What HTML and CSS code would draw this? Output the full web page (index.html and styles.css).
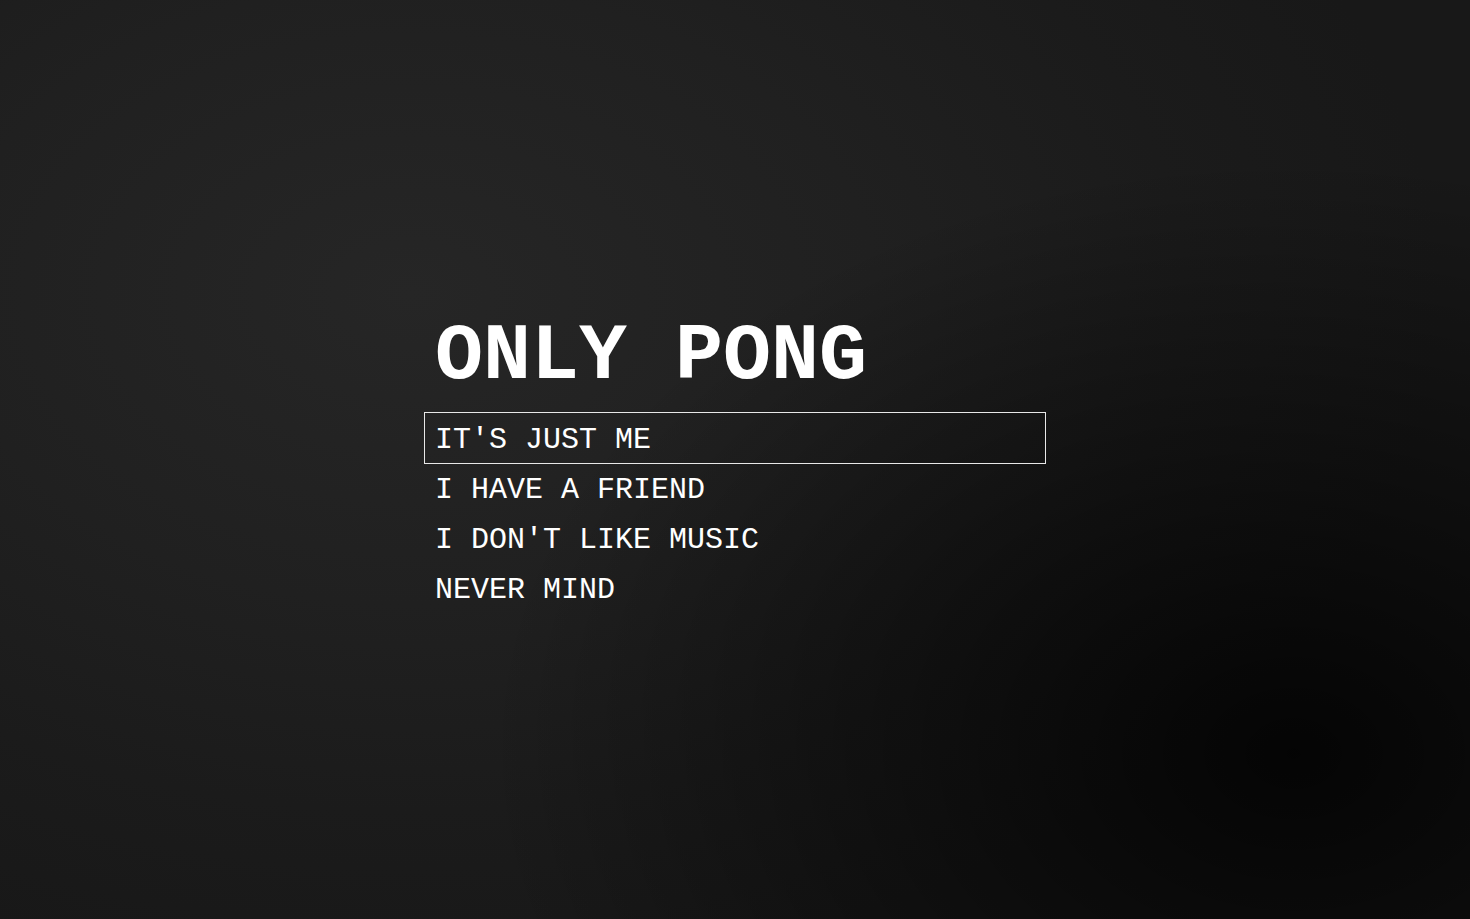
FILE: index.html
```html
<!DOCTYPE html>
<html lang="en">
<head>
<meta charset="utf-8">
<title>Only Pong</title>
<link rel="stylesheet" href="styles.css">
</head>
<body>
<main class="screen">
  <div class="panel">
    <h1 class="title">ONLY PONG</h1>
    <ul class="menu">
      <li class="item selected">IT'S JUST ME</li>
      <li class="item">I HAVE A FRIEND</li>
      <li class="item">I DON'T LIKE MUSIC</li>
      <li class="item">NEVER MIND</li>
    </ul>
  </div>
</main>
</body>
</html>
```
FILE: styles.css
```css
html, body {
  margin: 0;
  padding: 0;
  height: 100%;
}
body {
  background-color: #1a1a1a;
  background-image:
    radial-gradient(ellipse 55% 65% at 88% 82%, rgba(0,0,0,0.82) 0%, rgba(0,0,0,0.45) 45%, rgba(0,0,0,0) 100%),
    radial-gradient(ellipse 70% 75% at 28% 32%, #262626 0%, #202020 45%, #1b1b1b 75%, #181818 100%);
  font-family: "Liberation Mono", "DejaVu Sans Mono", monospace;
  color: #ffffff;
  overflow: hidden;
}
.screen {
  min-height: 100vh;
  box-sizing: border-box;
  padding-top: 4px;
  display: flex;
  align-items: center;
  justify-content: center;
}
.panel {
  width: 620px;
  display: flex;
  flex-direction: column;
}
.title {
  margin: 0 0 11px 0;
  padding-left: 10px;
  font-size: 80px;
  font-weight: 700;
  line-height: normal;
  color: #ffffff;
}
.menu {
  list-style: none;
  margin: 0;
  padding: 0;
  display: flex;
  flex-direction: column;
}
.item {
  font-size: 30px;
  line-height: 34px;
  padding: 10px 10px 6px 10px;
  white-space: nowrap;
}
.item.selected {
  outline: 1px solid #e8e8e8;
}
```
